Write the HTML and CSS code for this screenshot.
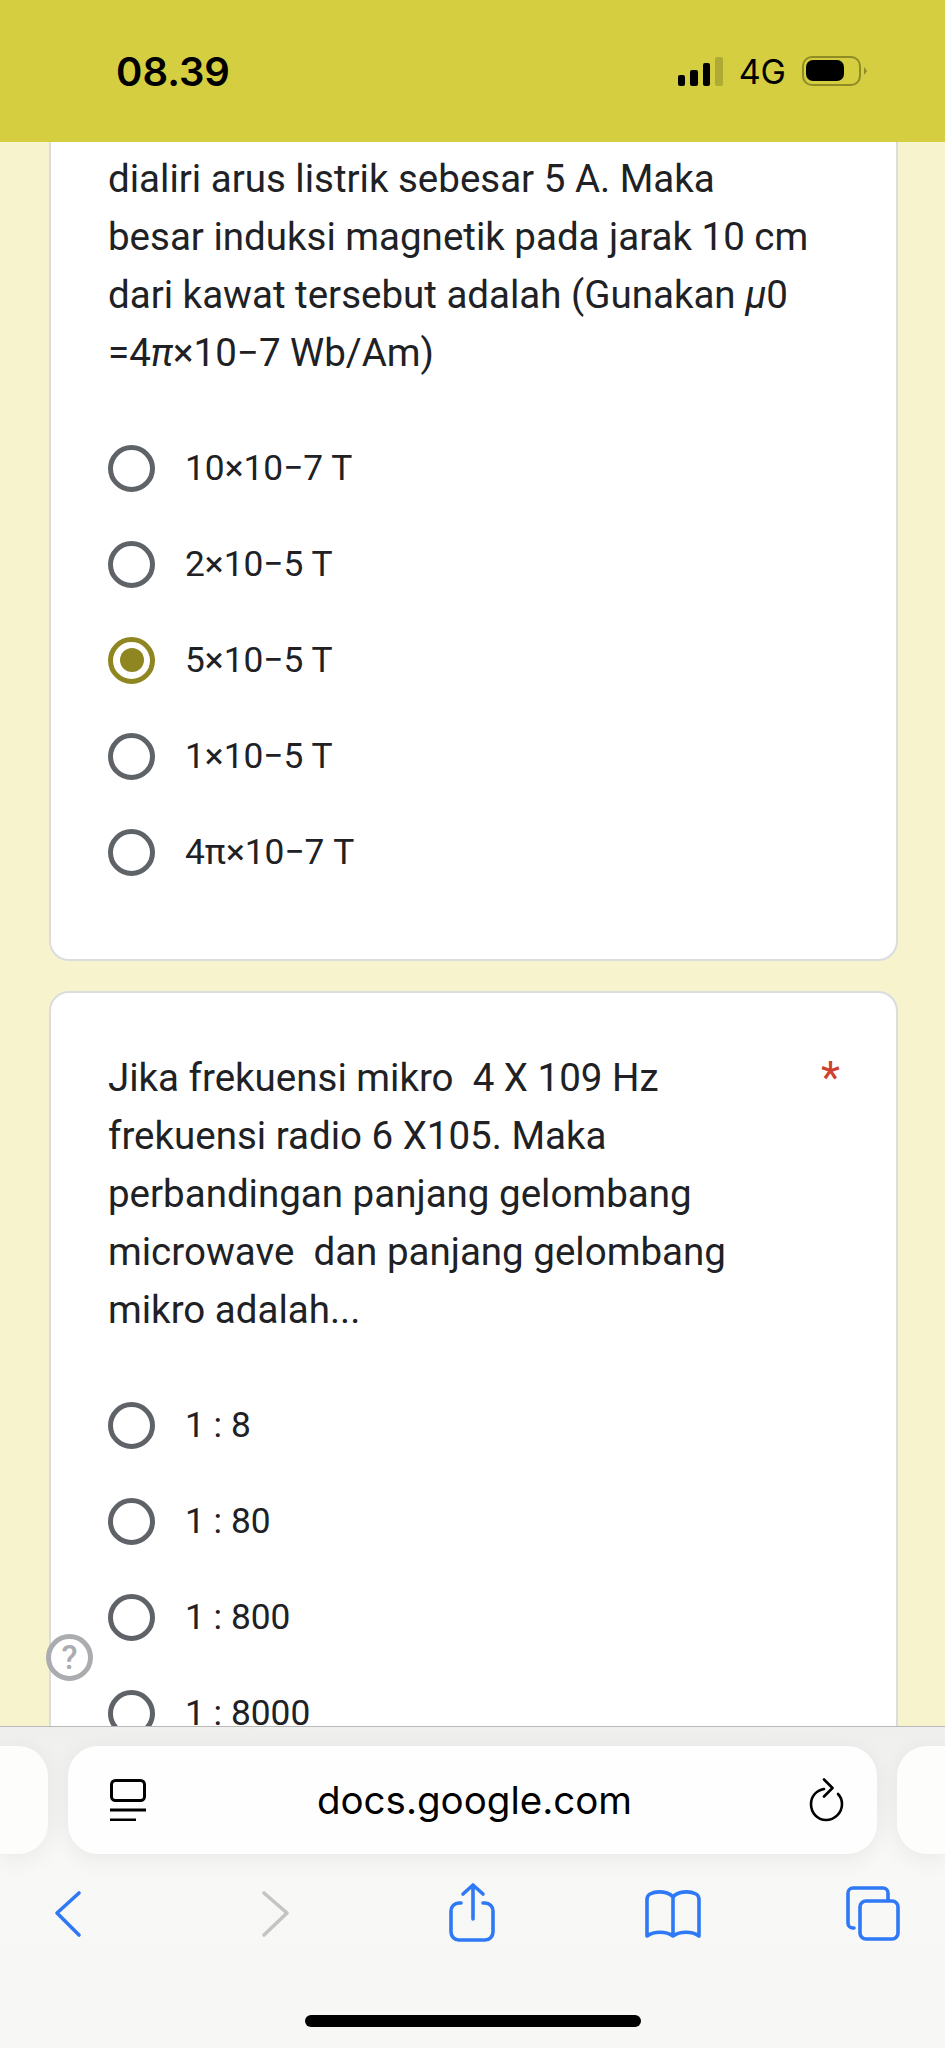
FILE: index.html
```html
<!DOCTYPE html>
<html lang="id">
  <head>
    <meta charset="utf-8">
    <title>Formulir</title>
    <link rel="stylesheet" href="styles.css">
  </head>
  <body>
    <div class="phone">
      <div class="status">
        <span class="time">08.39</span>
        <div class="signal">
          <span class="bar bar1"></span>
          <span class="bar bar2"></span>
          <span class="bar bar3"></span>
          <span class="bar bar4"></span>
        </div>
        <span class="net">4G</span>
        <div class="battery"><span class="charge"></span></div>
        <span class="battery-cap"></span>
      </div>

      <div class="form">
        <div class="card card-first">
          <div class="question">
            <p>dialiri arus listrik sebesar 5 A. Maka<br>
            besar induksi magnetik pada jarak 10 cm<br>
            dari kawat tersebut adalah (Gunakan <i>μ</i>0<br>
            =4<i>π</i>×10−7 Wb/Am)</p>
          </div>
          <div class="options">
            <div class="option"><span class="radio"></span>10×10−7 T</div>
            <div class="option"><span class="radio"></span>2×10−5 T</div>
            <div class="option"><span class="radio checked"><span class="dot"></span></span>5×10−5 T</div>
            <div class="option"><span class="radio"></span>1×10−5 T</div>
            <div class="option"><span class="radio"></span>4π×10−7 T</div>
          </div>
        </div>

        <div class="card">
          <div class="question">
            <p>Jika frekuensi mikro &nbsp;4 X 109 Hz<br>
            frekuensi radio 6 X105. Maka<br>
            perbandingan panjang gelombang<br>
            microwave &nbsp;dan panjang gelombang<br>
            mikro adalah...</p>
            <span class="required">*</span>
          </div>
          <div class="options">
            <div class="option"><span class="radio"></span>1 : 8</div>
            <div class="option"><span class="radio"></span>1 : 80</div>
            <div class="option"><span class="radio"></span>1 : 800</div>
            <div class="option"><span class="radio"></span>1 : 8000</div>
          </div>
        </div>

        <div class="help">?</div>
      </div>

      <div class="browser">
        <div class="address-row">
          <div class="tab-edge tab-left"></div>
          <div class="address">
            <svg class="reader" width="36" height="42" viewBox="0 0 36 42">
              <rect x="1.500" y="1.500" width="33" height="20" rx="4" fill="none" stroke="#000" stroke-width="3"/>
              <path d="M0 31H36M0 41H26" stroke="#000" stroke-width="3" fill="none"/>
            </svg>
            <span class="url">docs.google.com</span>
            <svg class="reload" width="36" height="44" viewBox="0 0 36 44">
              <path d="M15 11C7 12.500 2 18.500 2 26c0 9 6.500 16 15 16s16-7 16-16c0-4-1.500-7.500-4-10" fill="none" stroke="#000" stroke-width="2.600" stroke-linecap="round"/>
              <path d="M15 1.500l8.500 8.500-8.500 8.500" fill="none" stroke="#000" stroke-width="2.600" stroke-linecap="round" stroke-linejoin="round"/>
            </svg>
          </div>
          <div class="tab-edge tab-right"></div>
        </div>

        <div class="tools">
          <svg class="tool" viewBox="0 0 60 64">
            <path d="M41 13L19 33l22 22" stroke="#2f78f6"/>
          </svg>
          <svg class="tool" viewBox="0 0 60 64">
            <path d="M24 13l23 20-23 22" stroke="#c4c4c2"/>
          </svg>
          <svg class="tool" viewBox="0 0 60 64">
            <path d="M19 23h-2a8 8 0 0 0-8 8v21a8 8 0 0 0 8 8h26a8 8 0 0 0 8-8V31a8 8 0 0 0-8-8h-2" stroke="#2f78f6"/>
            <path d="M31 39V6M21 14l10-9 10 9" stroke="#2f78f6"/>
          </svg>
          <svg class="tool" viewBox="0 0 60 64">
            <path d="M29 17C25 12 14 10 6 14c-2 1-3 3-3 6v36c7-5 19-5 26 0 7-5 19-5 26 0V20c0-3-1-5-3-6-8-4-19-2-23 3zM29 17v39" stroke="#2f78f6"/>
          </svg>
          <svg class="tool" viewBox="0 0 60 64">
            <path d="M8 48h-1a5 5 0 0 1-5-5V13a5 5 0 0 1 5-5h30a5 5 0 0 1 5 5v7" stroke="#2f78f6"/>
            <rect x="14" y="21" width="38" height="38" rx="6" stroke="#2f78f6"/>
          </svg>
        </div>

        <div class="home-bar"></div>
      </div>
    </div>
  </body>
</html>
```

FILE: styles.css
```css
html, body {
    margin: 0;
    padding: 0;
}
.phone {
    width: 945px;
    height: 2048px;
    display: flex;
    flex-direction: column;
    overflow: hidden;
    background: #f6f3cd;
    font-family: Roboto, "Noto Sans", sans-serif;
    color: #202124;
}

/* status bar */
.status {
    height: 142px;
    flex: none;
    display: flex;
    align-items: center;
    padding: 0 78px 0 116px;
    box-sizing: border-box;
    background: #d4ce40;
    color: #000;
    font-family: Inter, "Liberation Sans", sans-serif;
}
.time {
    font-size: 40px;
    font-weight: 600;
    margin-right: auto;
}
.signal {
    display: flex;
    align-items: flex-end;
    gap: 5px;
    height: 29px;
    margin-right: 16px;
}
.bar {
    width: 7.500px;
    border-radius: 2px;
    background: #000;
}
.bar1 { height: 11px; }
.bar2 { height: 16px; }
.bar3 { height: 23px; }
.bar4 { height: 29px; background: #aeaa33; }
.net {
    font-size: 34px;
    font-weight: 400;
    margin-right: 16px;
}
.battery {
    width: 59px;
    height: 30px;
    box-sizing: border-box;
    border: 2.500px solid #8f8b25;
    border-radius: 10px;
    padding: 2px;
}
.charge {
    display: block;
    width: 38px;
    height: 21px;
    background: #000;
    border-radius: 7px;
}
.battery-cap {
    width: 0;
    height: 0;
    margin-left: 3px;
    border-left: 3px solid #8f8b25;
    border-top: 4px solid transparent;
    border-bottom: 4px solid transparent;
}

/* form */
.form {
    position: relative;
    flex: 1;
    min-height: 0;
    overflow: hidden;
    padding: 0 47px 0 49px;
}
.card {
    background: #fff;
    border: 2px solid #dadce0;
    border-radius: 20px;
    padding: 56px 56px 59px 57px;
    margin-bottom: 30px;
}
.card-first {
    border-top: 0;
    border-radius: 0 0 20px 20px;
    padding-top: 8px;
}
.question {
    display: flex;
    justify-content: space-between;
    font-size: 38.500px;
    line-height: 58px;
    margin-bottom: 38px;
}
.question p {
    margin: 0;
    white-space: nowrap;
}
.required {
    color: #d0402f;
    font-size: 44px;
}
.option {
    display: flex;
    align-items: center;
    height: 96px;
    font-size: 35.300px;
}
.radio {
    width: 47px;
    height: 47px;
    box-sizing: border-box;
    border: 5px solid #5f6368;
    border-radius: 50%;
    margin-right: 30px;
    display: flex;
    align-items: center;
    justify-content: center;
}
.radio.checked {
    border-color: #8f8622;
}
.dot {
    width: 24px;
    height: 24px;
    border-radius: 50%;
    background: #8f8622;
}
.help {
    position: absolute;
    left: 46px;
    top: 1492px;
    width: 47px;
    height: 47px;
    box-sizing: border-box;
    border: 5px solid #aaacaf;
    border-radius: 50%;
    background: #fff;
    color: #aaacaf;
    font-size: 33px;
    font-weight: 500;
    line-height: 37px;
    text-align: center;
}

/* safari bar */
.browser {
    height: 322px;
    flex: none;
    box-sizing: border-box;
    border-top: 1px solid #b9b9b9;
    background: linear-gradient(#efefed, #f8f8f6 35%, #f7f7f5);
    padding-top: 19px;
    font-family: Inter, "Liberation Sans", sans-serif;
}
.address-row {
    display: flex;
    gap: 20px;
    height: 108px;
}
.tab-edge {
    width: 48px;
    flex: none;
    background: #fdfdfc;
    box-shadow: 0 4px 24px rgba(0, 0, 0, 0.07);
}
.tab-left { border-radius: 0 30px 30px 0; }
.tab-right { border-radius: 30px 0 0 30px; }
.address {
    flex: 1;
    display: flex;
    align-items: center;
    padding: 0 32px 0 42px;
    background: #fefefe;
    border-radius: 30px;
    box-shadow: 0 4px 24px rgba(0, 0, 0, 0.07);
}
.url {
    flex: 1;
    text-align: center;
    font-size: 38.500px;
    color: #000;
    margin-right: 6px;
}
.tools {
    display: flex;
    gap: 142px;
    padding: 26px 0 0 38px;
}
.tool {
    width: 60px;
    height: 64px;
    flex: none;
}
.tool path, .tool rect {
    fill: none;
    stroke-width: 3.600;
    stroke-linecap: round;
    stroke-linejoin: round;
}
.home-bar {
    width: 336px;
    height: 12px;
    margin: 71px auto 0;
    border-radius: 6px;
    background: #000;
}
```
